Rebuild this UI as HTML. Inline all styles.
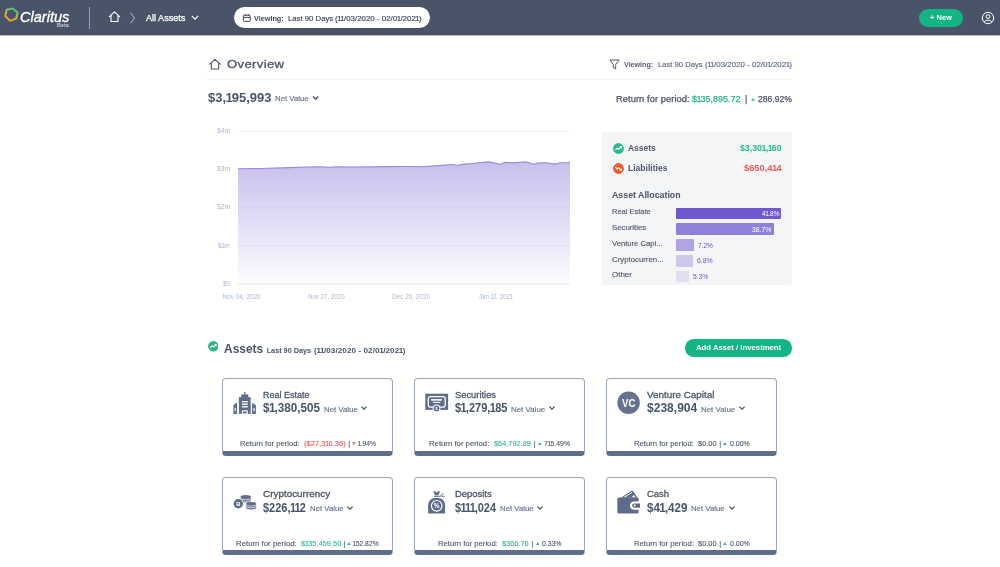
<!DOCTYPE html>
<html lang="en"><head><meta charset="utf-8"><title>Claritus</title>
<style>
*{box-sizing:border-box;margin:0;padding:0}
html,body{width:1000px;height:567px;overflow:hidden;background:#fff}
body{will-change:transform;font-family:"Liberation Sans",sans-serif;color:#4a5468;position:relative}
.x{position:absolute;white-space:nowrap;line-height:1;display:block;transform-origin:0 0}
#hdr{position:absolute;left:0;top:0;width:1000px;height:35px;background:#4a5469;border-bottom:1px solid #424c62;box-shadow:0 1px 0 rgba(74,84,105,.38)}
.n{margin:0 -.1em 0 -.06em}
.nb{margin:0 -.08em 0 -.05em}
.card{position:absolute;width:171px;height:78.400px;border:1px solid #9ba6bf;border-bottom:5px solid #606d8a;border-radius:4px;background:#fff}
.panel{position:absolute;left:602px;top:132px;width:190px;height:152.8px;background:#f4f5f7;border-radius:3px}
.bar{position:absolute;left:676px;height:11.9px;border-radius:1px}
</style></head><body>

<div id="hdr"></div>
<svg class="x" style="left:3px;top:7px" width="17" height="17" viewBox="0 0 17 17"><defs><linearGradient id="lg" x1="0.2" y1="1" x2="0.7" y2="0"><stop offset="0" stop-color="#f7941e"/><stop offset=".55" stop-color="#c9c043"/><stop offset="1" stop-color="#35c486"/></linearGradient></defs><path d="M3.7 2.6 L10 1.5 L14.600 5.800 L13 11.700 L7.100 13.800 L2.200 9 Z" fill="none" stroke="url(#lg)" stroke-width="1.9" stroke-linejoin="round"/></svg>
<div class="x" style="left:89px;top:7px;width:1px;height:21.500px;background:#98a0b1"></div>
<svg class="x" style="left:108px;top:10px" width="13" height="13" viewBox="0 0 13 13"><path d="M1.400 6.600 L6.500 1.900 L11.600 6.600 M3 5.600 V11.500 H10 V5.600" fill="none" stroke="#fff" stroke-width="1.100" stroke-linejoin="round" stroke-linecap="round"/></svg>
<svg class="x" style="left:129px;top:12px" width="7" height="12" viewBox="0 0 7 12"><path d="M1.500 0.800 L5.500 6 L1.500 11.200" fill="none" stroke="#b9bfcc" stroke-width="1"/></svg>
<svg class="x" style="left:190px;top:14px" width="10" height="8" viewBox="0 0 10 8"><path d="M1.800 1.900 L5 5.100 L8.200 1.900" fill="none" stroke="#fff" stroke-width="1.200"/></svg>
<div class="x" style="left:234.400px;top:7px;width:196px;height:21.200px;border-radius:10.600px;background:#fff"></div>
<svg class="x" style="left:242px;top:13px" width="10" height="10" viewBox="0 0 10 10"><rect x="1.400" y="2.200" width="6.800" height="6.200" rx="1" fill="none" stroke="#3d4659" stroke-width="1"/><path d="M1.400 4.400 H8.200 M3.300 1 V2.600 M6.300 1 V2.600" stroke="#3d4659" stroke-width="1"/></svg>
<div class="x" style="left:919px;top:8.800px;width:44.300px;height:18.400px;border-radius:9.200px;background:#14b584"></div>
<svg class="x" style="left:981px;top:11px" width="14" height="14" viewBox="0 0 14 14"><circle cx="7" cy="7" r="5.700" fill="none" stroke="#fff" stroke-width="1"/><circle cx="7" cy="5.600" r="1.900" fill="none" stroke="#fff" stroke-width="1"/><path d="M3.200 11 C4.200 8.700 9.800 8.700 10.800 11" fill="none" stroke="#fff" stroke-width="1"/></svg>

<svg class="x" style="left:208px;top:57px" width="14" height="14" viewBox="0 0 14 14"><path d="M1.800 7.200 L7 2.300 L12.200 7.200 M3.400 6.200 V12 H10.600 V6.200" fill="none" stroke="#4a5468" stroke-width="1.100" stroke-linejoin="round" stroke-linecap="round"/></svg>
<svg class="x" style="left:608px;top:58px" width="13" height="13" viewBox="0 0 13 13"><path d="M1.800 2 H11.200 L7.700 6.400 V10.800 L5.300 9.600 V6.400 Z" fill="none" stroke="#4a5468" stroke-width="1" stroke-linejoin="round"/></svg>
<div class="x" style="left:207px;top:78.500px;width:585px;height:1px;background:#f1f2f6"></div>
<svg class="x" style="left:311px;top:95px" width="9" height="6" viewBox="0 0 9 6"><path d="M2 1.500 L4.600 4.100 L7.200 1.500" fill="none" stroke="#4a5468" stroke-width="1.400"/></svg>
<svg class="x" style="left:751px;top:97.500px" width="4" height="3" viewBox="0 0 4 3"><polygon points="0,2.800 4,2.800 2,0.200" fill="#2ab888"/></svg>

<svg class="x" style="left:207px;top:120px" width="385" height="190" viewBox="207 120 385 190">
  <defs><linearGradient id="ag" x1="0" y1="0" x2="0" y2="1"><stop offset="0" stop-color="#c9bfed"/><stop offset="1" stop-color="#fdfdff"/></linearGradient></defs>
  <path d="M238 131.400H570M238 169.500H570M238 207.600H570M238 245.700H570" stroke="#f1f2f7" stroke-width="1"/>
  <path d="M238 168.800 L260 168.500 L290 167.600 L316 166.700 L322 166.900 L328 167.300 L337 166.700 L350 167 L370 166.900 L390 166.600 L405 166.500 L422 166.700 L439 165.600 L451 164.500 L457.700 165.300 L464.500 164.100 L473 163.600 L478 162.800 L488.300 161.900 L493.400 162.900 L500.200 164.300 L504.500 162.400 L513.800 162.900 L526.600 161.900 L533.400 164.300 L537.700 163.100 L546 162.800 L555.500 164.100 L559.800 162.800 L567.400 162.800 L570 161.900 L570 284 L238 284 Z" fill="url(#ag)"/>
  <path d="M238 169.500H570M238 207.600H570M238 245.700H570" stroke="#b9aee6" stroke-opacity=".16" stroke-width="1"/>
  <path d="M238 168.800 L260 168.500 L290 167.600 L316 166.700 L322 166.900 L328 167.300 L337 166.700 L350 167 L370 166.900 L390 166.600 L405 166.500 L422 166.700 L439 165.600 L451 164.500 L457.700 165.300 L464.500 164.100 L473 163.600 L478 162.800 L488.300 161.900 L493.400 162.900 L500.200 164.300 L504.500 162.400 L513.800 162.900 L526.600 161.900 L533.400 164.300 L537.700 163.100 L546 162.800 L555.500 164.100 L559.800 162.800 L567.400 162.800 L570 161.900" fill="none" stroke="#9a89de" stroke-width="1.100" stroke-linejoin="round"/>
  <path d="M238 284H570" stroke="#e3e3e6" stroke-width="1.200"/>
</svg>

<div class="panel"></div>
<svg class="x" style="left:612.800px;top:143.300px" width="11" height="11" viewBox="0 0 11 11"><circle cx="5.500" cy="5.500" r="5.400" fill="#2ab888"/><path d="M2.400 6.900 L4.300 5 L5.800 6.300 L8.300 3.700 M6.600 3.600 H8.400 V5.400" fill="none" stroke="#fff" stroke-width="1.100"/></svg>
<svg class="x" style="left:612.800px;top:163.300px" width="11" height="11" viewBox="0 0 11 11"><circle cx="5.500" cy="5.500" r="5.400" fill="#f4592b"/><path d="M2.400 4.100 L4.300 6 L5.800 4.700 L8.300 7.300 M6.600 7.400 H8.400 V5.600" fill="none" stroke="#fff" stroke-width="1.100"/></svg>
<div class="bar" style="top:207.600px;width:105.200px;background:#7058d0"></div>
<div class="bar" style="top:223.400px;width:97.800px;background:#917fdc"></div>
<div class="bar" style="top:239.200px;width:17.900px;background:#b1a3e5"></div>
<div class="bar" style="top:254.900px;width:16.900px;background:#cfc8ed"></div>
<div class="bar" style="top:270.600px;width:13px;background:#e2def1"></div>

<svg class="x" style="left:207.900px;top:341.200px" width="10.600" height="10.600" viewBox="0 0 11 11"><circle cx="5.500" cy="5.500" r="5.400" fill="#2ab888"/><path d="M2.400 6.900 L4.300 5 L5.800 6.300 L8.300 3.700 M6.600 3.600 H8.400 V5.400" fill="none" stroke="#fff" stroke-width="1.100"/></svg>
<div class="x" style="left:684.600px;top:339px;width:107.600px;height:17.500px;border-radius:8.800px;background:#14b584"></div>

<div class="card" style="left:222px;top:378px"></div>
<svg class="x" style="left:360.2px;top:405.4px" width="8" height="6" viewBox="0 0 8 6"><path d="M1.4 1.6 L4 4.2 L6.600 1.6" fill="none" stroke="#4a5468" stroke-width="1.3"/></svg>
<svg class="x" style="left:351.8px;top:442.1px" width="3.800" height="3.100" viewBox="0 0 3.800 3.100"><polygon points="0,0.200 3.800,0.200 1.900,2.900" fill="#ea5a5a"/></svg>
<div class="card" style="left:414px;top:378px"></div>
<svg class="x" style="left:548.2px;top:405.4px" width="8" height="6" viewBox="0 0 8 6"><path d="M1.4 1.6 L4 4.2 L6.600 1.6" fill="none" stroke="#4a5468" stroke-width="1.3"/></svg>
<svg class="x" style="left:537.5px;top:442.1px" width="3.800" height="3.100" viewBox="0 0 3.800 3.100"><polygon points="0,2.900 3.800,2.900 1.900,0.200" fill="#2ab888"/></svg>
<div class="card" style="left:606px;top:378px"></div>
<svg class="x" style="left:737.7px;top:405.4px" width="8" height="6" viewBox="0 0 8 6"><path d="M1.4 1.6 L4 4.2 L6.600 1.6" fill="none" stroke="#4a5468" stroke-width="1.3"/></svg>
<svg class="x" style="left:723.3px;top:442.1px" width="3.800" height="3.100" viewBox="0 0 3.800 3.100"><polygon points="0,2.900 3.800,2.900 1.900,0.200" fill="#2ab888"/></svg>
<div class="card" style="left:222px;top:477px"></div>
<svg class="x" style="left:345.8px;top:504.9px" width="8" height="6" viewBox="0 0 8 6"><path d="M1.4 1.6 L4 4.2 L6.600 1.6" fill="none" stroke="#4a5468" stroke-width="1.3"/></svg>
<svg class="x" style="left:347.2px;top:541.6px" width="3.800" height="3.100" viewBox="0 0 3.800 3.100"><polygon points="0,2.900 3.800,2.900 1.900,0.200" fill="#2ab888"/></svg>
<div class="card" style="left:414px;top:477px"></div>
<svg class="x" style="left:536.3px;top:504.9px" width="8" height="6" viewBox="0 0 8 6"><path d="M1.4 1.6 L4 4.2 L6.600 1.6" fill="none" stroke="#4a5468" stroke-width="1.3"/></svg>
<svg class="x" style="left:535.6px;top:541.6px" width="3.800" height="3.100" viewBox="0 0 3.800 3.100"><polygon points="0,2.900 3.800,2.900 1.900,0.200" fill="#2ab888"/></svg>
<div class="card" style="left:606px;top:477px"></div>
<svg class="x" style="left:727.7px;top:504.9px" width="8" height="6" viewBox="0 0 8 6"><path d="M1.4 1.6 L4 4.2 L6.600 1.6" fill="none" stroke="#4a5468" stroke-width="1.3"/></svg>
<svg class="x" style="left:723.3px;top:541.6px" width="3.800" height="3.100" viewBox="0 0 3.800 3.100"><polygon points="0,2.900 3.800,2.900 1.900,0.200" fill="#2ab888"/></svg>
<!-- card icons -->
<svg class="x" style="left:233px;top:391px" width="24" height="24" viewBox="0 0 24 24" fill="#5f6c88"><rect x="5.900" y="6.100" width="11.800" height="16.800"/><rect x="8.300" y="3.400" width="7" height="3"/><rect x="11.100" y="0.900" width="1.400" height="2.800"/><polygon points="0.400,14.200 4.100,11.200 4.100,22.900 0.400,22.900"/><polygon points="19.100,11.800 22.900,14.200 22.900,22.900 19.100,22.900"/><g fill="#fff"><rect x="8.900" y="10" width="5.900" height="1.350"/><rect x="8.900" y="12.500" width="5.900" height="1.350"/><rect x="8.900" y="15.100" width="5.900" height="1.350"/><rect x="8.900" y="19.300" width="5.900" height="3.600"/><rect x="1.700" y="16.900" width="1.100" height="3.300"/><rect x="20.500" y="16.900" width="1.200" height="3.300"/></g><rect x="10" y="20.500" width="3.600" height="1.800"/></svg>
<svg class="x" style="left:425px;top:393px" width="24" height="20" viewBox="0 0 24 20"><rect x="0.300" y="0.700" width="22.800" height="16.200" fill="#5f6c88"/><rect x="3.300" y="3.700" width="16.900" height="10.400" rx="2" fill="none" stroke="#fff" stroke-width="1.300"/><rect x="6.100" y="6.100" width="10.800" height="1.600" fill="#fff"/><rect x="7.900" y="8.900" width="7.500" height="1" fill="#fff"/><circle cx="11.500" cy="15.400" r="3.900" fill="#fff"/><circle cx="11.500" cy="15.400" r="2.900" fill="#5f6c88"/><text x="11.500" y="17" font-family="Liberation Sans, sans-serif" font-size="4.400" font-weight="700" fill="#fff" text-anchor="middle">$</text></svg>
<svg class="x" style="left:617px;top:391px" width="24" height="24" viewBox="0 0 24 24"><circle cx="11.600" cy="11.700" r="11.250" fill="#66738f"/></svg>
<svg class="x" style="left:233px;top:494px" width="24" height="16" viewBox="0 0 24 16" fill="#5f6c88"><path d="M7.600 2.600 A5.100 1.600 0 0 1 17.800 2.600 V6.900 A5.100 1.600 0 0 1 7.600 6.900 Z"/><path d="M7.600 3.900 A5.100 1.600 0 0 0 17.800 3.900 M7.600 5.700 A5.100 1.600 0 0 0 17.800 5.700" fill="none" stroke="#fff" stroke-width=".7"/><path d="M13.300 9.500 A4.900 1.400 0 0 1 23.100 9.500 V14 A4.900 1.400 0 0 1 13.300 14 Z" stroke="#fff" stroke-width="1.300"/><path d="M13.300 9.500 A4.900 1.400 0 0 1 23.100 9.500 V14 A4.900 1.400 0 0 1 13.300 14 Z"/><path d="M13.300 10.700 A4.900 1.400 0 0 0 23.100 10.700 M13.300 12.400 A4.900 1.400 0 0 0 23.100 12.400" fill="none" stroke="#fff" stroke-width=".7"/><circle cx="5.300" cy="9.700" r="5.400" fill="#fff"/><circle cx="5.300" cy="9.700" r="4.700"/><text x="5.300" y="11.900" font-family="Liberation Sans, sans-serif" font-size="6" font-weight="700" fill="#fff" text-anchor="middle">B</text></svg>
<svg class="x" style="left:427px;top:490px" width="20" height="24" viewBox="0 0 20 24" fill="#5f6c88"><path d="M1.100 22.400 V15.500 C1.100 10.500 4.500 7.700 9.600 7.700 C14.700 7.700 18.100 10.500 18.100 15.500 V22.400 Q18.100 23.600 16.900 23.600 H2.300 Q1.100 23.600 1.100 22.400 Z"/><path d="M6.500 1 Q8.300 0.700 9.650 2.700 Q11 0.700 12.800 1 Q13 3.700 11.300 5.200 H8 Q6.300 3.700 6.500 1 Z"/><path d="M7.200 6.300 H13.600 M13.400 5.800 L16.600 3.300 M14.400 6.200 L17.800 6.300" fill="none" stroke="#5f6c88" stroke-width="1"/><circle cx="9.700" cy="15.800" r="5.300" fill="none" stroke="#fff" stroke-width="1.150"/><text x="9.700" y="17.900" font-family="Liberation Sans, sans-serif" font-size="6.400" font-weight="700" fill="#fff" text-anchor="middle">%</text></svg>
<svg class="x" style="left:617px;top:490px" width="24" height="24" viewBox="0 0 24 24" fill="#5f6c88"><path d="M3.900 7.800 L14.100 1 Q15.600 0.200 16.500 1.600 L20.400 7.800Z"/><path d="M7.300 7.200 L15.100 2.400" stroke="#fff" stroke-width="1" fill="none"/><polygon points="14.600,7.500 16.800,5 18.800,7.500" fill="#fff"/><rect x="0.300" y="7.400" width="21.400" height="16.200" rx="1.600"/><path d="M23 11.500 H17.100 A4.100 4.100 0 0 0 17.100 19.700 H23 Z" fill="#fff"/><path d="M23 13.400 H17.300 A2.150 2.150 0 0 0 17.300 17.700 H23 Z"/><circle cx="17.700" cy="15.500" r="0.900" fill="#fff"/></svg>

<span class="x" style="left:20.00px;top:9.01px;font-size:15.2px;color:#fff;font-style:italic;-webkit-text-stroke:.35px #fff;transform:scaleX(0.958);">Claritus</span>
<span class="x" style="left:57.30px;top:24.00px;font-size:4.8px;color:#c9ced8;font-weight:700;letter-spacing:0.013px;transform:scaleX(1.120);">Beta</span>
<span class="x" style="left:145.80px;top:14.00px;font-size:8.66px;color:#fff;-webkit-text-stroke:.25px #fff;transform:scaleX(1.050);">All Assets</span>
<span class="x" style="left:254.30px;top:16.01px;font-size:7.12px;color:#3d4659;font-weight:700;transform:scaleX(1.020);">Viewing:</span>
<span class="x" style="left:287.80px;top:16.01px;font-size:7.12px;color:#3d4659;-webkit-text-stroke:.15px #3d4659;transform:scaleX(1.089);">Last 90 Days</span>
<span class="x" style="left:335.00px;top:16.01px;font-size:7.12px;color:#3d4659;-webkit-text-stroke:.15px #3d4659;transform:scaleX(1.113);">(<span class="n">1</span><span class="n">1</span>/03/2020 - 02/0<span class="n">1</span>/202<span class="n">1</span>)</span>
<span class="x" style="left:930.00px;top:15.00px;font-size:6.84px;color:#fff;font-weight:700;transform:scaleX(1.103);">+ New</span>
<span class="x" style="left:227.30px;top:58.01px;font-size:11.73px;color:#4a5468;letter-spacing:0.293px;-webkit-text-stroke:.3px #4a5468;transform:scaleX(1.120);">Overview</span>
<span class="x" style="left:624.40px;top:61.01px;font-size:7.3px;color:#566079;font-weight:700;transform:scaleX(0.977);">Viewing:</span>
<span class="x" style="left:657.80px;top:61.01px;font-size:7.3px;color:#66718c;-webkit-text-stroke:.18px #66718c;transform:scaleX(1.049);">Last 90 Days</span>
<span class="x" style="left:704.50px;top:61.01px;font-size:7.3px;color:#66718c;-webkit-text-stroke:.18px #66718c;transform:scaleX(1.090);">(<span class="n">1</span><span class="n">1</span>/03/2020 - 02/0<span class="n">1</span>/202<span class="n">1</span>)</span>
<span class="x" style="left:207.80px;top:92.00px;font-size:12.1px;color:#4a5468;font-weight:700;transform:scaleX(1.076);">$3,<span class="nb">1</span>95,993</span>
<span class="x" style="left:275.30px;top:95.00px;font-size:7.6px;color:#66718c;-webkit-text-stroke:.15px #66718c;transform:scaleX(1.028);">Net Value</span>
<span class="x" style="left:616.00px;top:95.01px;font-size:8.3px;color:#4a5468;letter-spacing:0.067px;-webkit-text-stroke:.25px #4a5468;transform:scaleX(1.120);">Return for period:</span>
<span class="x" style="left:692.00px;top:95.01px;font-size:8.3px;color:#2ab888;-webkit-text-stroke:.25px #2ab888;transform:scaleX(1.083);">$<span class="n">1</span>35,895.72</span>
<span class="x" style="left:745.00px;top:95.01px;font-size:8.3px;color:#4a5468;-webkit-text-stroke:.25px #4a5468;">|</span>
<span class="x" style="left:757.60px;top:95.01px;font-size:8.3px;color:#4a5468;-webkit-text-stroke:.25px #4a5468;transform:scaleX(1.038);">286.92%</span>
<span class="x" style="left:216.60px;top:128.00px;font-size:6.5px;color:#aab6d0;transform:scaleX(1.059);">$4m</span>
<span class="x" style="left:216.80px;top:166.01px;font-size:6.5px;color:#aab6d0;transform:scaleX(1.043);">$3m</span>
<span class="x" style="left:216.80px;top:204.01px;font-size:6.5px;color:#aab6d0;transform:scaleX(1.043);">$2m</span>
<span class="x" style="left:218.40px;top:243.00px;font-size:6.5px;color:#aab6d0;transform:scaleX(0.995);">$<span class="n">1</span>m</span>
<span class="x" style="left:222.80px;top:281.01px;font-size:6.5px;color:#aab6d0;transform:scaleX(0.995);">$0</span>
<span class="x" style="left:222.60px;top:294.02px;font-size:6.4px;color:#aab6d0;">Nov 04, 2020</span>
<span class="x" style="left:308.00px;top:294.02px;font-size:6.4px;color:#aab6d0;transform:scaleX(0.962);">Nov 27, 2020</span>
<span class="x" style="left:392.00px;top:294.02px;font-size:6.4px;color:#aab6d0;">Dec 20, 2020</span>
<span class="x" style="left:479.40px;top:294.02px;font-size:6.4px;color:#aab6d0;transform:scaleX(0.960);">Jan <span class="n">1</span>2, 202<span class="n">1</span></span>
<span class="x" style="left:627.90px;top:144.00px;font-size:8.6px;color:#4a5468;font-weight:700;transform:scaleX(0.986);">Assets</span>
<span class="x" style="left:739.80px;top:144.00px;font-size:8.6px;color:#2ab888;font-weight:700;transform:scaleX(1.019);">$3,30<span class="nb">1</span>,<span class="nb">1</span>60</span>
<span class="x" style="left:627.90px;top:164.00px;font-size:8.6px;color:#4a5468;font-weight:700;transform:scaleX(0.994);">Liabilities</span>
<span class="x" style="left:743.70px;top:164.00px;font-size:8.6px;color:#ea5a5a;font-weight:700;transform:scaleX(1.085);">$650,4<span class="nb">1</span>4</span>
<span class="x" style="left:612.20px;top:191.01px;font-size:8.4px;color:#4a5468;font-weight:700;transform:scaleX(1.050);">Asset Allocation</span>
<span class="x" style="left:612.00px;top:208.00px;font-size:7.4px;color:#4a5468;-webkit-text-stroke:.12px #4a5468;transform:scaleX(1.015);">Real Estate</span>
<span class="x" style="left:612.00px;top:224.00px;font-size:7.4px;color:#4a5468;-webkit-text-stroke:.12px #4a5468;transform:scaleX(1.054);">Securities</span>
<span class="x" style="left:612.00px;top:240.00px;font-size:7.4px;color:#4a5468;-webkit-text-stroke:.12px #4a5468;transform:scaleX(1.035);">Venture Capi...</span>
<span class="x" style="left:612.00px;top:256.00px;font-size:7.4px;color:#4a5468;-webkit-text-stroke:.12px #4a5468;transform:scaleX(1.057);">Cryptocurren...</span>
<span class="x" style="left:612.00px;top:271.00px;font-size:7.4px;color:#4a5468;-webkit-text-stroke:.12px #4a5468;transform:scaleX(1.077);">Other</span>
<span class="x" style="left:762.00px;top:211.01px;font-size:7.1px;color:#fff;transform:scaleX(0.920);">4<span class="n">1</span>.8%</span>
<span class="x" style="left:752.40px;top:227.01px;font-size:7.1px;color:#fff;transform:scaleX(0.959);">38.7%</span>
<span class="x" style="left:697.50px;top:243.01px;font-size:7.1px;color:#6a4fd0;transform:scaleX(0.915);">7.2%</span>
<span class="x" style="left:696.70px;top:258.01px;font-size:7.1px;color:#6a4fd0;transform:scaleX(0.965);">6.8%</span>
<span class="x" style="left:693.00px;top:274.01px;font-size:7.1px;color:#6a4fd0;transform:scaleX(0.940);">5.3%</span>
<span class="x" style="left:223.50px;top:343.01px;font-size:12.2px;color:#4a5468;font-weight:700;transform:scaleX(0.980);">Assets</span>
<span class="x" style="left:266.70px;top:347.00px;font-size:7.26px;color:#4a5468;font-weight:700;">Last 90 Days</span>
<span class="x" style="left:313.50px;top:347.00px;font-size:7.26px;color:#4a5468;font-weight:700;letter-spacing:0.063px;transform:scaleX(1.120);">(<span class="nb">1</span><span class="nb">1</span>/03/2020 - 02/0<span class="nb">1</span>/202<span class="nb">1</span>)</span>
<span class="x" style="left:622.10px;top:399.01px;font-size:10px;color:#fff;font-weight:700;transform:scaleX(0.964);">VC</span>
<span class="x" style="left:696.00px;top:345.01px;font-size:7.12px;color:#fff;font-weight:700;transform:scaleX(1.087);">Add Asset / Investment</span>
<span class="x" style="left:262.90px;top:390.00px;font-size:9.5px;color:#4a5468;-webkit-text-stroke:.3px #4a5468;transform:scaleX(0.947);">Real Estate</span>
<span class="x" style="left:262.90px;top:402.02px;font-size:12.2px;color:#4a5468;font-weight:700;transform:scaleX(0.959);">$<span class="nb">1</span>,380,505</span>
<span class="x" style="left:323.70px;top:406.01px;font-size:7.7px;color:#66718c;-webkit-text-stroke:.15px #66718c;transform:scaleX(1.018);">Net Value</span>
<span class="x" style="left:239.70px;top:440.01px;font-size:7.3px;color:#4a5468;-webkit-text-stroke:.1px #4a5468;transform:scaleX(1.048);">Return for period:</span>
<span class="x" style="left:303.90px;top:440.01px;font-size:7.3px;color:#ea5a5a;-webkit-text-stroke:.1px #ea5a5a;transform:scaleX(1.039);">($27,3<span class="n">1</span>6.36)</span>
<span class="x" style="left:348.20px;top:440.01px;font-size:7.3px;color:#4a5468;-webkit-text-stroke:.1px #4a5468;">|</span>
<span class="x" style="left:357.50px;top:440.01px;font-size:7.3px;color:#4a5468;-webkit-text-stroke:.1px #4a5468;transform:scaleX(0.926);"><span class="n">1</span>.94%</span>
<span class="x" style="left:454.90px;top:390.00px;font-size:9.5px;color:#4a5468;-webkit-text-stroke:.3px #4a5468;transform:scaleX(0.983);">Securities</span>
<span class="x" style="left:454.90px;top:402.02px;font-size:12.2px;color:#4a5468;font-weight:700;transform:scaleX(0.906);">$<span class="nb">1</span>,279,<span class="nb">1</span>85</span>
<span class="x" style="left:511.10px;top:406.01px;font-size:7.7px;color:#66718c;-webkit-text-stroke:.15px #66718c;transform:scaleX(1.030);">Net Value</span>
<span class="x" style="left:429.40px;top:440.01px;font-size:7.3px;color:#4a5468;-webkit-text-stroke:.1px #4a5468;transform:scaleX(1.062);">Return for period:</span>
<span class="x" style="left:494.00px;top:440.01px;font-size:7.3px;color:#2ab888;-webkit-text-stroke:.1px #2ab888;transform:scaleX(1.010);">$64,792.89</span>
<span class="x" style="left:533.40px;top:440.01px;font-size:7.3px;color:#4a5468;-webkit-text-stroke:.1px #4a5468;">|</span>
<span class="x" style="left:543.80px;top:440.01px;font-size:7.3px;color:#4a5468;-webkit-text-stroke:.1px #4a5468;transform:scaleX(0.940);">7<span class="n">1</span>5.49%</span>
<span class="x" style="left:646.90px;top:390.00px;font-size:9.5px;color:#4a5468;-webkit-text-stroke:.3px #4a5468;transform:scaleX(1.037);">Venture Capital</span>
<span class="x" style="left:646.90px;top:402.02px;font-size:12.2px;color:#4a5468;font-weight:700;transform:scaleX(0.989);">$238,904</span>
<span class="x" style="left:700.70px;top:406.01px;font-size:7.7px;color:#66718c;-webkit-text-stroke:.15px #66718c;transform:scaleX(1.030);">Net Value</span>
<span class="x" style="left:633.60px;top:440.01px;font-size:7.3px;color:#4a5468;-webkit-text-stroke:.1px #4a5468;transform:scaleX(1.053);">Return for period:</span>
<span class="x" style="left:697.80px;top:440.01px;font-size:7.3px;color:#4a5468;-webkit-text-stroke:.1px #4a5468;transform:scaleX(1.018);">$0.00</span>
<span class="x" style="left:719.20px;top:440.01px;font-size:7.3px;color:#4a5468;-webkit-text-stroke:.1px #4a5468;">|</span>
<span class="x" style="left:729.70px;top:440.01px;font-size:7.3px;color:#4a5468;-webkit-text-stroke:.1px #4a5468;transform:scaleX(0.956);">0.00%</span>
<span class="x" style="left:262.90px;top:489.00px;font-size:9.5px;color:#4a5468;-webkit-text-stroke:.3px #4a5468;transform:scaleX(1.042);">Cryptocurrency</span>
<span class="x" style="left:262.90px;top:502.02px;font-size:12.2px;color:#4a5468;font-weight:700;transform:scaleX(0.900);">$226,<span class="nb">1</span><span class="nb">1</span>2</span>
<span class="x" style="left:309.60px;top:505.01px;font-size:7.7px;color:#66718c;-webkit-text-stroke:.15px #66718c;transform:scaleX(1.015);">Net Value</span>
<span class="x" style="left:235.90px;top:540.01px;font-size:7.3px;color:#4a5468;-webkit-text-stroke:.1px #4a5468;transform:scaleX(1.070);">Return for period:</span>
<span class="x" style="left:300.50px;top:540.01px;font-size:7.3px;color:#2ab888;-webkit-text-stroke:.1px #2ab888;transform:scaleX(1.022);">$<span class="n">1</span>35,459.50</span>
<span class="x" style="left:343.40px;top:540.01px;font-size:7.3px;color:#4a5468;-webkit-text-stroke:.1px #4a5468;">|</span>
<span class="x" style="left:353.10px;top:540.01px;font-size:7.3px;color:#4a5468;-webkit-text-stroke:.1px #4a5468;transform:scaleX(0.929);"><span class="n">1</span>52.82%</span>
<span class="x" style="left:454.90px;top:489.00px;font-size:9.5px;color:#4a5468;-webkit-text-stroke:.3px #4a5468;transform:scaleX(0.993);">Deposits</span>
<span class="x" style="left:454.90px;top:502.02px;font-size:12.2px;color:#4a5468;font-weight:700;letter-spacing:-0.081px;transform:scaleX(0.900);">$<span class="nb">1</span><span class="nb">1</span><span class="nb">1</span>,024</span>
<span class="x" style="left:499.70px;top:505.01px;font-size:7.7px;color:#66718c;-webkit-text-stroke:.15px #66718c;transform:scaleX(1.015);">Net Value</span>
<span class="x" style="left:438.00px;top:540.01px;font-size:7.3px;color:#4a5468;-webkit-text-stroke:.1px #4a5468;transform:scaleX(1.053);">Return for period:</span>
<span class="x" style="left:502.40px;top:540.01px;font-size:7.3px;color:#2ab888;-webkit-text-stroke:.1px #2ab888;transform:scaleX(1.008);">$366.76</span>
<span class="x" style="left:531.60px;top:540.01px;font-size:7.3px;color:#4a5468;-webkit-text-stroke:.1px #4a5468;">|</span>
<span class="x" style="left:541.90px;top:540.01px;font-size:7.3px;color:#4a5468;-webkit-text-stroke:.1px #4a5468;transform:scaleX(0.937);">0.33%</span>
<span class="x" style="left:646.90px;top:489.00px;font-size:9.5px;color:#4a5468;-webkit-text-stroke:.3px #4a5468;transform:scaleX(0.992);">Cash</span>
<span class="x" style="left:646.90px;top:502.02px;font-size:12.2px;color:#4a5468;font-weight:700;transform:scaleX(0.953);">$4<span class="nb">1</span>,429</span>
<span class="x" style="left:691.20px;top:505.01px;font-size:7.7px;color:#66718c;-webkit-text-stroke:.15px #66718c;transform:scaleX(1.012);">Net Value</span>
<span class="x" style="left:633.60px;top:540.01px;font-size:7.3px;color:#4a5468;-webkit-text-stroke:.1px #4a5468;transform:scaleX(1.053);">Return for period:</span>
<span class="x" style="left:697.80px;top:540.01px;font-size:7.3px;color:#4a5468;-webkit-text-stroke:.1px #4a5468;transform:scaleX(1.018);">$0.00</span>
<span class="x" style="left:719.20px;top:540.01px;font-size:7.3px;color:#4a5468;-webkit-text-stroke:.1px #4a5468;">|</span>
<span class="x" style="left:729.70px;top:540.01px;font-size:7.3px;color:#4a5468;-webkit-text-stroke:.1px #4a5468;transform:scaleX(0.956);">0.00%</span>
</body></html>
